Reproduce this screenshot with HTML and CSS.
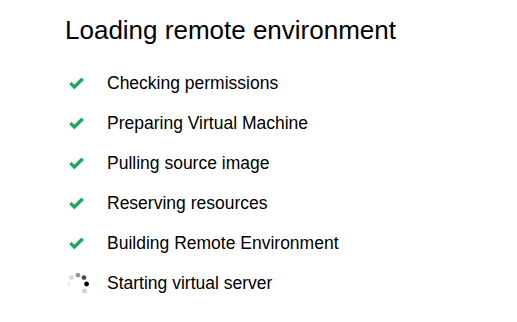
FILE: index.html
```html
<!DOCTYPE html>
<html>
<head>
<meta charset="utf-8">
<link rel="stylesheet" href="styles.css">
</head>
<body>
<div class="loader">
  <h1 class="title">Loading remote environment</h1>
  <ul class="steps">
    <li class="step"><span class="icon"><svg class="check" viewBox="0 0 15 12" width="15" height="12"><path d="M1.3 6 L5.4 10 L13.7 1.8" fill="none" stroke="#1ba862" stroke-width="3.4"/></svg></span><span class="label">Checking permissions</span></li>
    <li class="step"><span class="icon"><svg class="check" viewBox="0 0 15 12" width="15" height="12"><path d="M1.3 6 L5.4 10 L13.7 1.8" fill="none" stroke="#1ba862" stroke-width="3.4"/></svg></span><span class="label">Preparing Virtual Machine</span></li>
    <li class="step"><span class="icon"><svg class="check" viewBox="0 0 15 12" width="15" height="12"><path d="M1.3 6 L5.4 10 L13.7 1.8" fill="none" stroke="#1ba862" stroke-width="3.4"/></svg></span><span class="label">Pulling source image</span></li>
    <li class="step"><span class="icon"><svg class="check" viewBox="0 0 15 12" width="15" height="12"><path d="M1.3 6 L5.4 10 L13.7 1.8" fill="none" stroke="#1ba862" stroke-width="3.4"/></svg></span><span class="label">Reserving resources</span></li>
    <li class="step"><span class="icon"><svg class="check" viewBox="0 0 15 12" width="15" height="12"><path d="M1.3 6 L5.4 10 L13.7 1.8" fill="none" stroke="#1ba862" stroke-width="3.4"/></svg></span><span class="label">Building Remote Environment</span></li>
    <li class="step"><span class="icon"><svg class="spinner" viewBox="0 0 26 26" width="26" height="26">
      <circle cx="4" cy="12" r="2.4" fill="#000" fill-opacity="0.05"/>
      <circle cx="6.6" cy="5.6" r="2.4" fill="#000" fill-opacity="0.15"/>
      <circle cx="13" cy="3.2" r="2.4" fill="#000" fill-opacity="0.4"/>
      <circle cx="19" cy="5.6" r="2.4" fill="#000" fill-opacity="0.7"/>
      <circle cx="21.6" cy="12" r="2.4" fill="#000" fill-opacity="1"/>
      <circle cx="19.5" cy="19" r="2.4" fill="#000" fill-opacity="0.18"/>
    </svg></span><span class="label">Starting virtual server</span></li>
  </ul>
</div>
</body>
</html>
```
FILE: styles.css
```css
html, body {
  margin: 0;
  padding: 0;
  background: #fff;
}
body {
  font-family: "Liberation Sans", Arial, sans-serif;
  color: #000;
}
.loader {
  padding: 14px 0 0 65px;
}
.title {
  margin: 0;
  font-size: 26px;
  font-weight: normal;
  line-height: 32px;
}
.steps {
  list-style: none;
  margin: 24px 0 0 0;
  padding: 0;
  display: flex;
  flex-direction: column;
  gap: 14px;
}
.step {
  display: flex;
  align-items: center;
  height: 26px;
  font-size: 17.5px;
}
.icon {
  width: 42px;
  display: flex;
  align-items: center;
}
.check {
  margin-left: 4px;
}
.spinner {
  margin-top: 4px;
}
```
